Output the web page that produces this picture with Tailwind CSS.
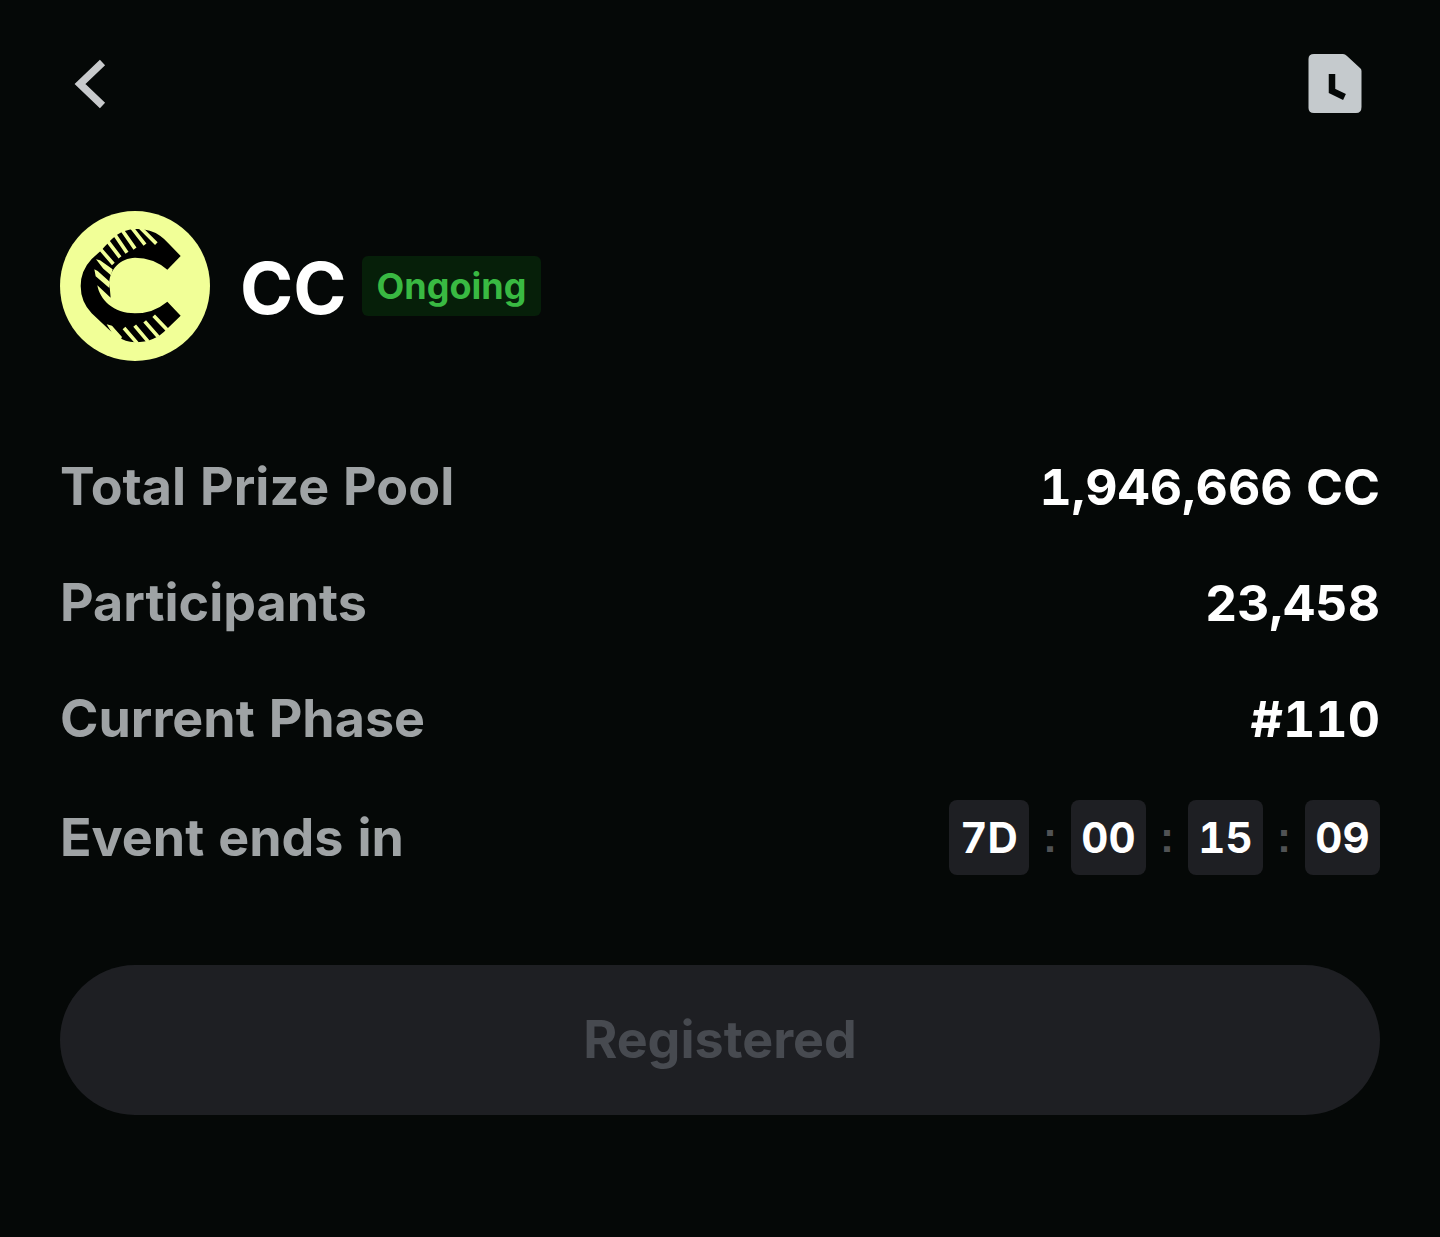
<!DOCTYPE html>
<html lang="en">
<head>
    <meta charset="utf-8">
    <title>CC Event</title>
    <script src="https://cdn.jsdelivr.net/npm/@tailwindcss/browser@4"></script>
</head>
<body class="min-h-screen bg-[#050807] font-['Inter',sans-serif] font-bold text-white">
<div class="flex flex-col px-[60px] pt-[50px]">
    <!-- Top bar -->
    <header class="flex items-center justify-between">
        <button type="button" aria-label="Back" class="px-3">
            <svg class="h-[66px] w-9" viewBox="0 0 36 66" fill="none">
                <path d="M30.5 12.5L8 34L30.5 55.5" stroke="#c8cacc" stroke-width="7.5"/>
            </svg>
        </button>
        <button type="button" aria-label="History" class="px-4">
            <svg class="h-[66px] w-[58px]" viewBox="0 0 58 66">
                <path fill="#c5cacd" d="M8 4H37Q39 4 41 6L54 18Q55.5 19 55.5 21V57Q55.5 63 50 63H8Q2.5 63 2.5 58V9Q2.5 4 8 4Z"/>
                <path fill="none" stroke="#050807" stroke-width="6.5" d="M26 24V41L38.5 47"/>
            </svg>
        </button>
    </header>

    <!-- Token -->
    <div class="mt-[95px] flex items-center">
        <svg class="size-[150px]" viewBox="30 33 450 450">
            <circle cx="255" cy="258" r="225" fill="#f1ff97"/>
            <path d="M392 168L352 209Q310 173 255 173C212 174 178 208 178 250L182 293L142 256C150 300 190 340 255 340Q310 340 352 305L392 347L350 388Q314 427 255 427C215 426 190 402 160 373L125 340Q92 305 92 258Q92 212 125 177L155 150C185 118 205 88 260 87Q300 86 330 107Q342 115 355 130Z"/>
            <!-- Hatching -->
            <g stroke="#f1ff97" stroke-width="11" fill="none">
                <path d="M272 84L319 131M243 80L285 134M216 90L255 146M193 102L231 158M169 118L210 172M152 148L190 192"/>
                <path d="M311 347L352 390M284 364L324 410M254 377L294 424M222 384L262 430"/>
            </g>
            <path fill="#f1ff97" d="M138 178L150 181L188 208L183 226L160 206ZM133 208L143 213L180 246L178 264L137 229ZM170 373L186 377L216 411L212 419L188 402Z"/>
        </svg>
        <h1 class="ml-[30px] pt-1 text-[72px] leading-[80px]">CC</h1>
        <span class="ml-[15px] rounded-md bg-[#061f09] px-[15px] text-[36px] leading-[60px] text-[#39b942]">Ongoing</span>
    </div>

    <!-- Event details -->
    <dl class="mt-[91px] flex flex-col gap-[46px] text-[50px] leading-[70px] tabular-nums">
        <div class="flex items-center justify-between">
            <dt class="text-[52px] text-[#9fa3a5]">Total Prize Pool</dt>
            <dd>1,946,666 CC</dd>
        </div>
        <div class="flex items-center justify-between">
            <dt class="text-[52px] text-[#9fa3a5]">Participants</dt>
            <dd>23,458</dd>
        </div>
        <div class="flex items-center justify-between">
            <dt class="text-[52px] text-[#9fa3a5]">Current Phase</dt>
            <dd>#110</dd>
        </div>
        <div class="flex items-center justify-between">
            <dt class="text-[52px] text-[#9fa3a5]">Event ends in</dt>
            <dd class="flex items-center text-[42px] leading-[75px]">
                <span class="w-20 rounded-lg bg-[#1e1f23] text-center">7D</span>
                <span class="w-[42px] text-center font-['Liberation_Sans',sans-serif] text-[#505254]">:</span>
                <span class="w-[75px] rounded-lg bg-[#1e1f23] text-center">00</span>
                <span class="w-[42px] text-center font-['Liberation_Sans',sans-serif] text-[#505254]">:</span>
                <span class="w-[75px] rounded-lg bg-[#1e1f23] text-center">15</span>
                <span class="w-[42px] text-center font-['Liberation_Sans',sans-serif] text-[#505254]">:</span>
                <span class="w-[75px] rounded-lg bg-[#1e1f23] text-center">09</span>
            </dd>
        </div>
    </dl>

    <button type="button" disabled class="mt-[90px] h-[150px] rounded-full bg-[#1e1f23] text-[52px] text-[#474a50]">Registered</button>
</div>
</body>
</html>
